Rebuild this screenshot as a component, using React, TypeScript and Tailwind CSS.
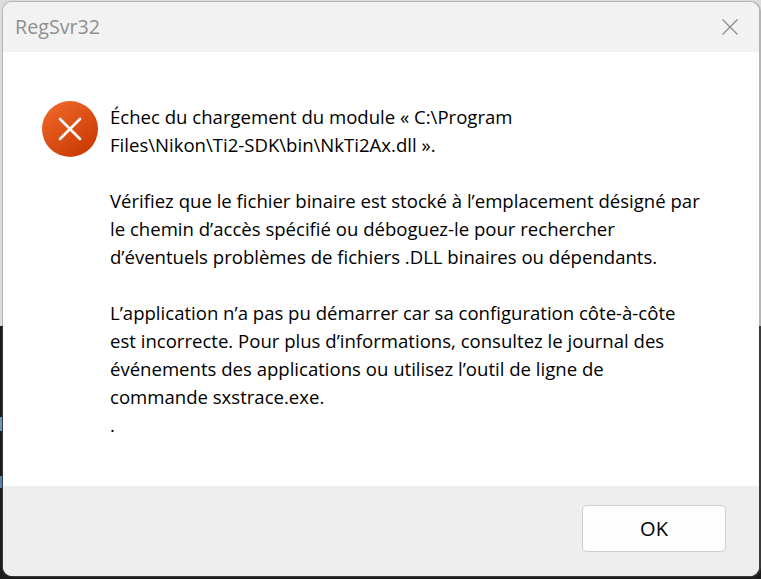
const paragraphs = [
  ["Échec du chargement du module « C:\\Program", "Files\\Nikon\\Ti2-SDK\\bin\\NkTi2Ax.dll »."],
  [
    "Vérifiez que le fichier binaire est stocké à l’emplacement désigné par",
    "le chemin d’accès spécifié ou déboguez-le pour rechercher",
    "d’éventuels problèmes de fichiers .DLL binaires ou dépendants.",
  ],
  [
    "L’application n’a pas pu démarrer car sa configuration côte-à-côte",
    "est incorrecte. Pour plus d’informations, consultez le journal des",
    "événements des applications ou utilisez l’outil de ligne de",
    "commande sxstrace.exe.",
    ".",
  ],
];

function ErrorIcon() {
  return (
    <svg viewBox="0 0 56 56" className="h-[56px] w-[56px] shrink-0" aria-hidden="true">
      <defs>
        <linearGradient id="err" x1="0.2" y1="0.1" x2="0.8" y2="0.95">
          <stop offset="0" stopColor="#ec6326" />
          <stop offset="1" stopColor="#c93a02" />
        </linearGradient>
      </defs>
      <circle cx="28" cy="28" r="28" fill="url(#err)" />
      <path d="M18 18 L38 38 M38 18 L18 38" stroke="#fff" strokeWidth="2.6" strokeLinecap="round" />
    </svg>
  );
}

export default function App() {
  return (
    <div className="h-[579px] w-[761px] overflow-hidden bg-[linear-gradient(to_bottom,#dcdcdc_0,#dcdcdc_326px,#1c1c1c_326px,#1c1c1c_417px,#6f93bd_417px,#6f93bd_431px,#1c1c1c_431px,#1c1c1c_476px,#5a82b0_476px,#5a82b0_488px,#1c1c1c_488px)] pb-[2px] pl-[2px] pt-[1px] font-['Open_Sans','Noto_Sans',sans-serif]">
      {/* window frame goes dark where the backdrop does */}
      <div className="h-full rounded-[10px] bg-[linear-gradient(to_bottom,#b4b4b4_0,#b4b4b4_325px,#3a3a3a_325px)] py-px pl-px pr-[2px]">
        <div className="flex h-full flex-col overflow-hidden rounded-[9px] bg-white">
          <div className="flex h-[50px] shrink-0 items-center justify-between bg-[#f2f2f2] pl-[12px] pr-[21px]">
            <span className="text-[19.7px] text-[#8f8f8f]">RegSvr32</span>
            <svg viewBox="0 0 16 16" className="h-[16px] w-[16px]" aria-hidden="true">
              <path d="M0.5 0.5 L15.5 15.5 M15.5 0.5 L0.5 15.5" stroke="#8a8a8a" strokeWidth="1.2" fill="none" />
            </svg>
          </div>
          <div className="flex flex-1 gap-[12px] pl-[39px] pr-[20px] pt-[49px]">
            <ErrorIcon />
            <div className="mt-[2px] flex flex-col gap-[28px] text-[18.57px] leading-[28px] text-black">
              {paragraphs.map((lines, i) => (
                <p key={i}>
                  {lines.map((line) => (
                    <span key={line} className="block whitespace-nowrap">
                      {line}
                    </span>
                  ))}
                </p>
              ))}
            </div>
          </div>
          <div className="flex h-[90px] shrink-0 items-start justify-end bg-[#eeeeee] pr-[33px] pt-[19px]">
            <button className="h-[47px] w-[144px] rounded-[5px] border border-[#cfcfcf] bg-[#fdfdfd] pt-[1px] text-[20px] text-black">
              OK
            </button>
          </div>
        </div>
      </div>
    </div>
  );
}
